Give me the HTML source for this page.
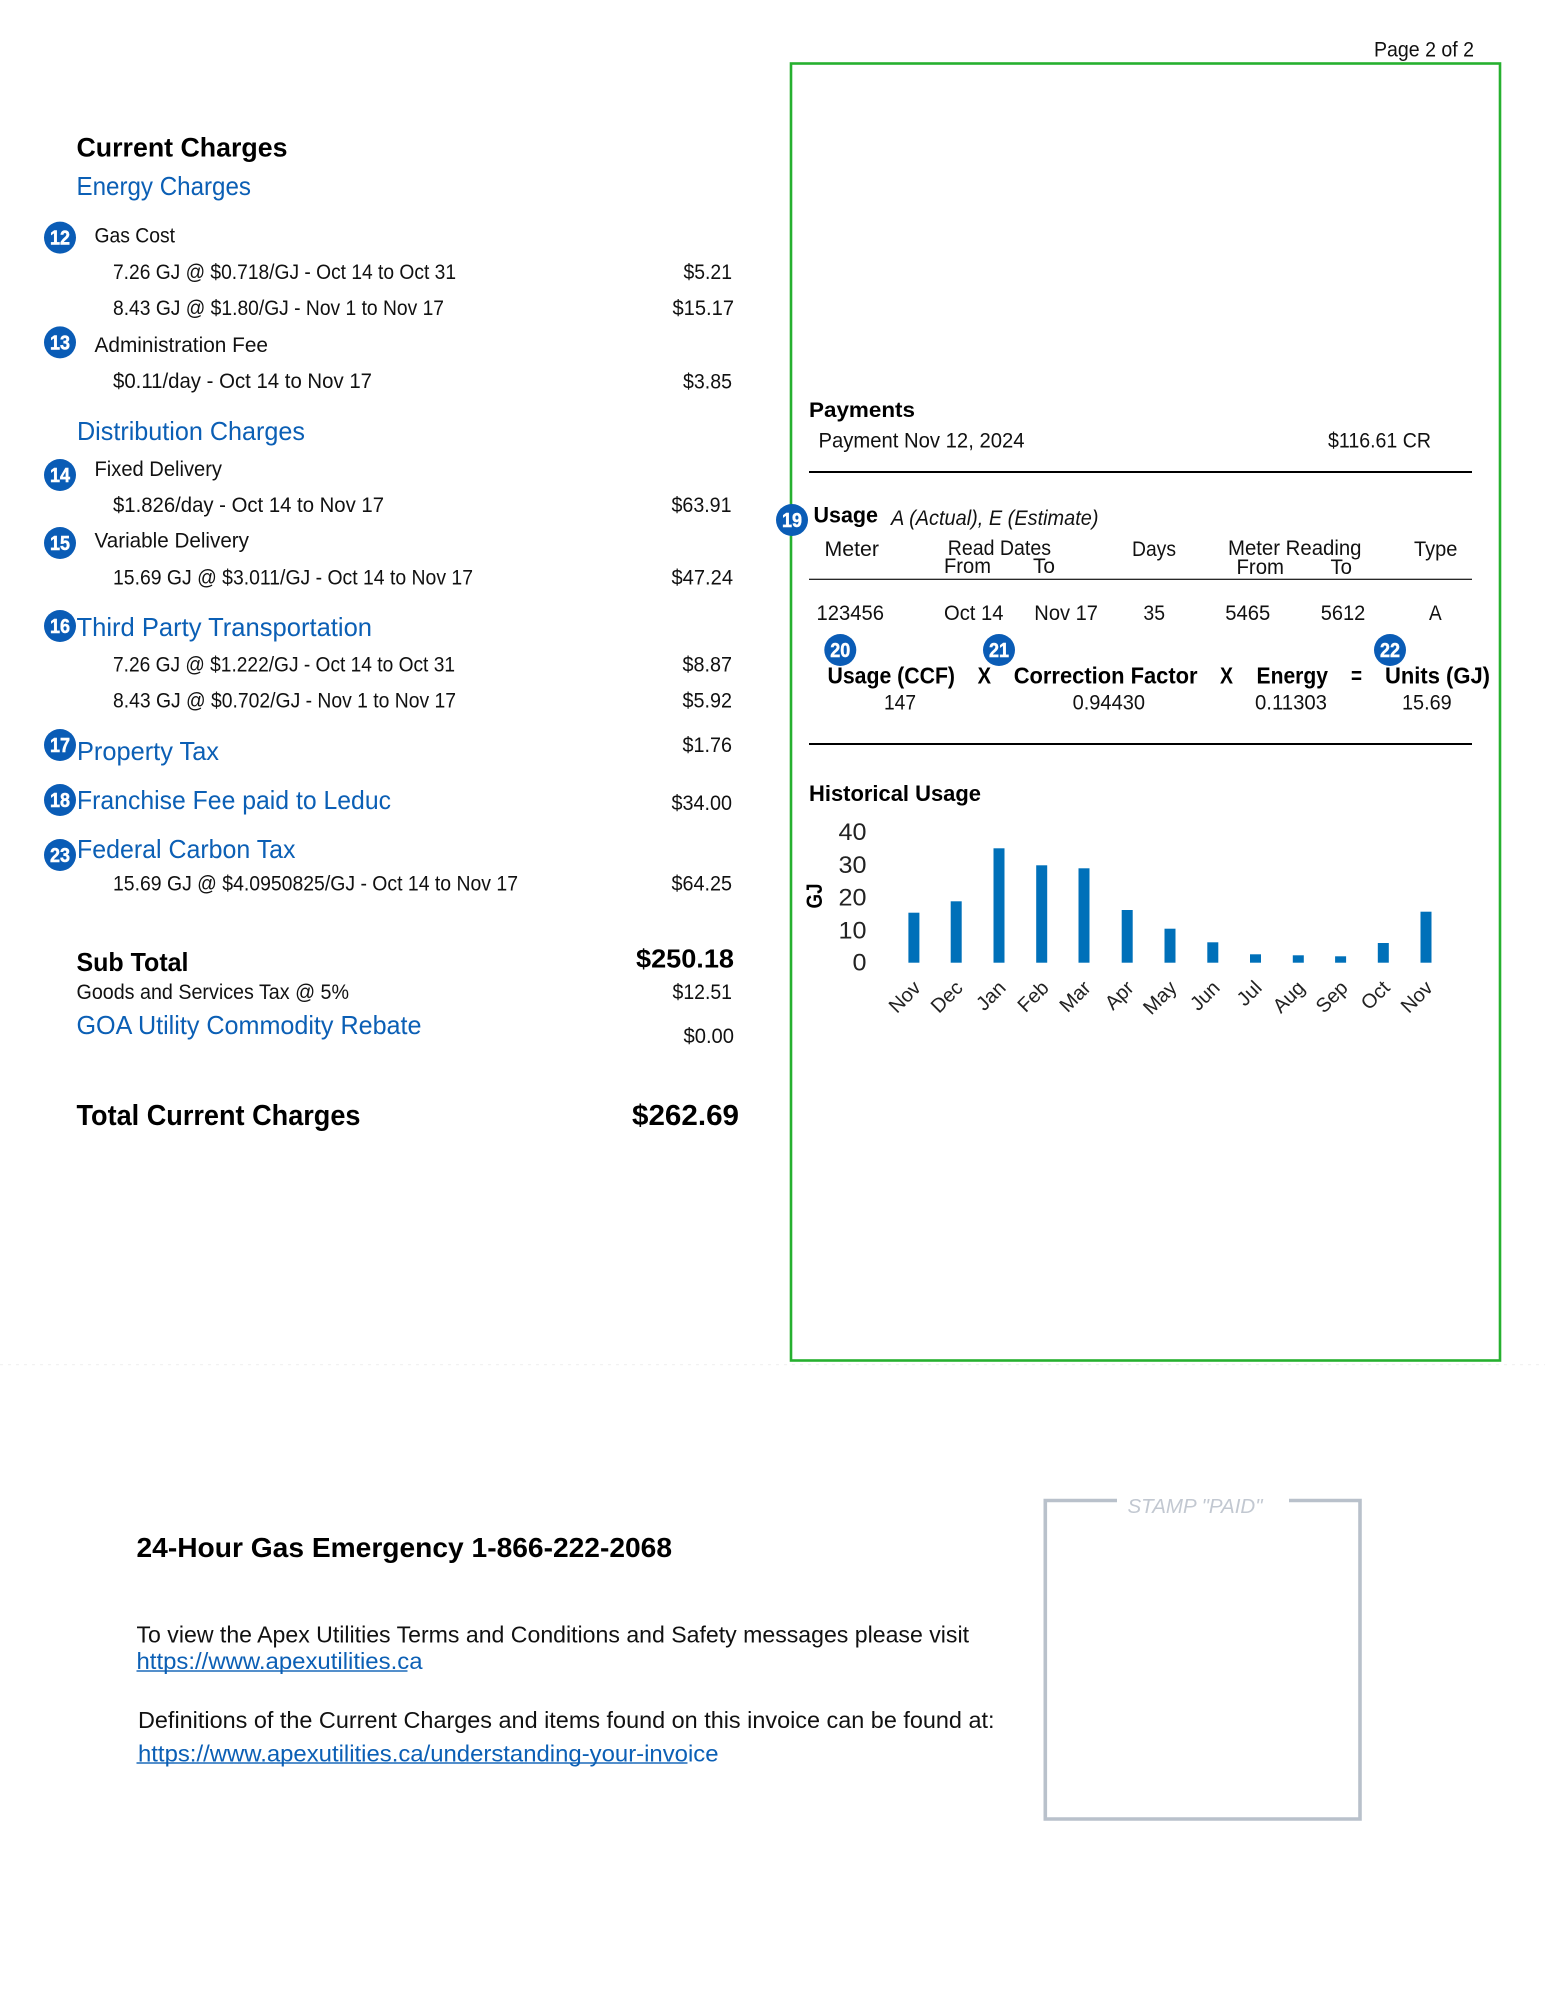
<!DOCTYPE html>
<html><head><meta charset="utf-8"><style>
html,body{margin:0;padding:0;background:#fff}
svg{display:block}
text{font-family:"Liberation Sans",Arial,sans-serif;fill:#111}
.b{font-weight:700;fill:#000}
.h{font-size:26px;fill:#0b5fb5}
.r{font-size:21px}
.n{font-weight:700;font-size:20px;fill:#fff;stroke:#fff;stroke-width:.5px}
.l{font-size:23px;fill:#0b5fb5}
.x{font-size:20px;fill:#222}
.y{font-size:24.5px;fill:#222}
</style></head><body>
<svg xmlns="http://www.w3.org/2000/svg" width="1545" height="2000" viewBox="0 0 1545 2000">
<rect width="1545" height="2000" fill="#fff"/>

<text class="r" x="1374" y="56.7" textLength="100" lengthAdjust="spacingAndGlyphs">Page 2 of 2</text>
<rect x="791" y="63.5" width="709" height="1297" fill="none" stroke="#26b02f" stroke-width="2.6"/>
<line x1="0" y1="1364.7" x2="1545" y2="1364.7" stroke="#f1f1f1" stroke-width="1.2" stroke-dasharray="3 5"/>

<!-- left column -->
<text class="b" font-size="27" x="76.5" y="156.5" textLength="211" lengthAdjust="spacingAndGlyphs">Current Charges</text>
<text class="h" x="76.5" y="195" textLength="174.5" lengthAdjust="spacingAndGlyphs">Energy Charges</text>

<circle cx="60" cy="237.6" r="16" fill="#0a5cb6"/><text class="n" x="50" y="244.6" textLength="20" lengthAdjust="spacingAndGlyphs">12</text>
<text class="r" x="94.5" y="242.6" textLength="80.5" lengthAdjust="spacingAndGlyphs">Gas Cost</text>
<text class="r" x="113" y="279" textLength="343" lengthAdjust="spacingAndGlyphs">7.26 GJ @ $0.718/GJ - Oct 14 to Oct 31</text>
<text class="r" x="683.5" y="279" textLength="48.5" lengthAdjust="spacingAndGlyphs">$5.21</text>
<text class="r" x="113" y="315" textLength="331" lengthAdjust="spacingAndGlyphs">8.43 GJ @ $1.80/GJ - Nov 1 to Nov 17</text>
<text class="r" x="672.5" y="315" textLength="61.5" lengthAdjust="spacingAndGlyphs">$15.17</text>

<circle cx="60" cy="342.4" r="16" fill="#0a5cb6"/><text class="n" x="50" y="349.4" textLength="20" lengthAdjust="spacingAndGlyphs">13</text>
<text class="r" x="94.5" y="352" textLength="173.5" lengthAdjust="spacingAndGlyphs">Administration Fee</text>
<text class="r" x="113" y="388" textLength="259" lengthAdjust="spacingAndGlyphs">$0.11/day - Oct 14 to Nov 17</text>
<text class="r" x="683" y="388.5" textLength="49" lengthAdjust="spacingAndGlyphs">$3.85</text>

<text class="h" x="77" y="440" textLength="228" lengthAdjust="spacingAndGlyphs">Distribution Charges</text>

<circle cx="60" cy="475" r="16" fill="#0a5cb6"/><text class="n" x="50" y="482" textLength="20" lengthAdjust="spacingAndGlyphs">14</text>
<text class="r" x="94.5" y="476" textLength="127.5" lengthAdjust="spacingAndGlyphs">Fixed Delivery</text>
<text class="r" x="113" y="512" textLength="271" lengthAdjust="spacingAndGlyphs">$1.826/day - Oct 14 to Nov 17</text>
<text class="r" x="671.5" y="512" textLength="60" lengthAdjust="spacingAndGlyphs">$63.91</text>

<circle cx="60" cy="543" r="16" fill="#0a5cb6"/><text class="n" x="50" y="550" textLength="20" lengthAdjust="spacingAndGlyphs">15</text>
<text class="r" x="94.5" y="547.5" textLength="154.5" lengthAdjust="spacingAndGlyphs">Variable Delivery</text>
<text class="r" x="113" y="584.6" textLength="360" lengthAdjust="spacingAndGlyphs">15.69 GJ @ $3.011/GJ - Oct 14 to Nov 17</text>
<text class="r" x="671.5" y="584.6" textLength="61.5" lengthAdjust="spacingAndGlyphs">$47.24</text>

<circle cx="60" cy="626" r="16" fill="#0a5cb6"/><text class="n" x="50" y="633" textLength="20" lengthAdjust="spacingAndGlyphs">16</text>
<text class="h" x="76.5" y="636" textLength="295.5" lengthAdjust="spacingAndGlyphs">Third Party Transportation</text>
<text class="r" x="113" y="671.7" textLength="342" lengthAdjust="spacingAndGlyphs">7.26 GJ @ $1.222/GJ - Oct 14 to Oct 31</text>
<text class="r" x="682.5" y="671.7" textLength="49.5" lengthAdjust="spacingAndGlyphs">$8.87</text>
<text class="r" x="113" y="707.7" textLength="343" lengthAdjust="spacingAndGlyphs">8.43 GJ @ $0.702/GJ - Nov 1 to Nov 17</text>
<text class="r" x="682.5" y="707.7" textLength="49.5" lengthAdjust="spacingAndGlyphs">$5.92</text>

<circle cx="60" cy="745" r="16" fill="#0a5cb6"/><text class="n" x="50" y="752" textLength="20" lengthAdjust="spacingAndGlyphs">17</text>
<text class="h" x="77" y="760" textLength="142" lengthAdjust="spacingAndGlyphs">Property Tax</text>
<text class="r" x="682.5" y="752" textLength="49.5" lengthAdjust="spacingAndGlyphs">$1.76</text>

<circle cx="60" cy="800" r="16" fill="#0a5cb6"/><text class="n" x="50" y="807" textLength="20" lengthAdjust="spacingAndGlyphs">18</text>
<text class="h" x="77" y="809" textLength="314" lengthAdjust="spacingAndGlyphs">Franchise Fee paid to Leduc</text>
<text class="r" x="671.5" y="810" textLength="60.5" lengthAdjust="spacingAndGlyphs">$34.00</text>

<circle cx="60" cy="855" r="16" fill="#0a5cb6"/><text class="n" x="50" y="862" textLength="20" lengthAdjust="spacingAndGlyphs">23</text>
<text class="h" x="77" y="858" textLength="218.5" lengthAdjust="spacingAndGlyphs">Federal Carbon Tax</text>
<text class="r" x="113" y="890.6" textLength="405" lengthAdjust="spacingAndGlyphs">15.69 GJ @ $4.0950825/GJ - Oct 14 to Nov 17</text>
<text class="r" x="671.5" y="890.6" textLength="60.5" lengthAdjust="spacingAndGlyphs">$64.25</text>

<text class="b" font-size="26" x="76.5" y="971" textLength="112" lengthAdjust="spacingAndGlyphs">Sub Total</text>
<text class="b" font-size="26" x="636" y="967.5" textLength="98" lengthAdjust="spacingAndGlyphs">$250.18</text>
<text class="r" x="76.5" y="999" textLength="272.5" lengthAdjust="spacingAndGlyphs">Goods and Services Tax @ 5%</text>
<text class="r" x="672.5" y="999" textLength="59.5" lengthAdjust="spacingAndGlyphs">$12.51</text>
<text class="h" x="76.5" y="1034" textLength="345" lengthAdjust="spacingAndGlyphs">GOA Utility Commodity Rebate</text>
<text class="r" x="683.5" y="1043" textLength="50.5" lengthAdjust="spacingAndGlyphs">$0.00</text>
<text class="b" font-size="29" x="76.5" y="1125" textLength="284" lengthAdjust="spacingAndGlyphs">Total Current Charges</text>
<text class="b" font-size="29" x="632" y="1125" textLength="107" lengthAdjust="spacingAndGlyphs">$262.69</text>

<!-- right column -->
<text class="b" font-size="21" x="809" y="417" textLength="106" lengthAdjust="spacingAndGlyphs">Payments</text>
<text class="r" x="818.5" y="447.7" textLength="206" lengthAdjust="spacingAndGlyphs">Payment Nov 12, 2024</text>
<text class="r" x="1328" y="447.7" textLength="103" lengthAdjust="spacingAndGlyphs">$116.61 CR</text>
<rect x="809" y="471" width="663" height="2" fill="#000"/>

<circle cx="792" cy="520" r="16" fill="#0a5cb6"/><text class="n" x="782" y="527" textLength="20" lengthAdjust="spacingAndGlyphs">19</text>
<text class="b" font-size="22" x="813.5" y="522.7" textLength="64.5" lengthAdjust="spacingAndGlyphs">Usage</text>
<text class="r" font-style="italic" x="891" y="525" textLength="207.5" lengthAdjust="spacingAndGlyphs">A (Actual), E (Estimate)</text>
<text class="r" x="824.5" y="556" textLength="54.5" lengthAdjust="spacingAndGlyphs">Meter</text>
<text class="r" x="947.7" y="555" textLength="103.3" lengthAdjust="spacingAndGlyphs">Read Dates</text>
<text class="r" x="944" y="573" textLength="47" lengthAdjust="spacingAndGlyphs">From</text>
<text class="r" x="1033" y="573" textLength="22" lengthAdjust="spacingAndGlyphs">To</text>
<text class="r" x="1132" y="556" textLength="44" lengthAdjust="spacingAndGlyphs">Days</text>
<text class="r" x="1228" y="555" textLength="133.5" lengthAdjust="spacingAndGlyphs">Meter Reading</text>
<text class="r" x="1236.5" y="574" textLength="47.5" lengthAdjust="spacingAndGlyphs">From</text>
<text class="r" x="1330.5" y="574" textLength="21.5" lengthAdjust="spacingAndGlyphs">To</text>
<text class="r" x="1414" y="556" textLength="43.4" lengthAdjust="spacingAndGlyphs">Type</text>
<rect x="809" y="578.7" width="663" height="1.2" fill="#111"/>

<text class="r" x="816.5" y="620" textLength="67.5" lengthAdjust="spacingAndGlyphs">123456</text>
<text class="r" x="944" y="620" textLength="59.5" lengthAdjust="spacingAndGlyphs">Oct 14</text>
<text class="r" x="1034.3" y="620" textLength="63.7" lengthAdjust="spacingAndGlyphs">Nov 17</text>
<text class="r" x="1143.4" y="620" textLength="21.6" lengthAdjust="spacingAndGlyphs">35</text>
<text class="r" x="1225.3" y="620" textLength="45" lengthAdjust="spacingAndGlyphs">5465</text>
<text class="r" x="1320.7" y="620" textLength="44.6" lengthAdjust="spacingAndGlyphs">5612</text>
<text class="r" x="1429" y="620" textLength="12.7" lengthAdjust="spacingAndGlyphs">A</text>

<circle cx="840.3" cy="650" r="16" fill="#0a5cb6"/><text class="n" x="830.3" y="657" textLength="20" lengthAdjust="spacingAndGlyphs">20</text>
<circle cx="999" cy="650" r="16" fill="#0a5cb6"/><text class="n" x="989" y="657" textLength="20" lengthAdjust="spacingAndGlyphs">21</text>
<circle cx="1390" cy="650" r="16" fill="#0a5cb6"/><text class="n" x="1380" y="657" textLength="20" lengthAdjust="spacingAndGlyphs">22</text>

<text class="b" font-size="23" x="827.5" y="683.7" textLength="127.5" lengthAdjust="spacingAndGlyphs">Usage (CCF)</text>
<text class="b" font-size="23" x="977.6" y="683.7" textLength="13.4" lengthAdjust="spacingAndGlyphs">X</text>
<text class="b" font-size="23" x="1013.7" y="683.7" textLength="183.9" lengthAdjust="spacingAndGlyphs">Correction Factor</text>
<text class="b" font-size="23" x="1220" y="683.7" textLength="13" lengthAdjust="spacingAndGlyphs">X</text>
<text class="b" font-size="23" x="1256.5" y="683.7" textLength="71.5" lengthAdjust="spacingAndGlyphs">Energy</text>
<text class="b" font-size="23" x="1351" y="683.7" textLength="11" lengthAdjust="spacingAndGlyphs">=</text>
<text class="b" font-size="23" x="1385" y="683.7" textLength="105" lengthAdjust="spacingAndGlyphs">Units (GJ)</text>

<text class="r" x="884" y="709.7" textLength="32" lengthAdjust="spacingAndGlyphs">147</text>
<text class="r" x="1072.6" y="709.7" textLength="72.4" lengthAdjust="spacingAndGlyphs">0.94430</text>
<text class="r" x="1255" y="709.7" textLength="72" lengthAdjust="spacingAndGlyphs">0.11303</text>
<text class="r" x="1402" y="709.7" textLength="49.7" lengthAdjust="spacingAndGlyphs">15.69</text>
<rect x="809" y="743" width="663" height="2" fill="#000"/>

<text class="b" font-size="22" x="809" y="801" textLength="172" lengthAdjust="spacingAndGlyphs">Historical Usage</text>

<!-- chart -->
<text class="y" x="838.5" y="840" textLength="28" lengthAdjust="spacingAndGlyphs">40</text>
<text class="y" x="838.5" y="873" textLength="28" lengthAdjust="spacingAndGlyphs">30</text>
<text class="y" x="838.5" y="905.7" textLength="28" lengthAdjust="spacingAndGlyphs">20</text>
<text class="y" x="838.5" y="938.3" textLength="28" lengthAdjust="spacingAndGlyphs">10</text>
<text class="y" x="852.5" y="970.7" textLength="14" lengthAdjust="spacingAndGlyphs">0</text>
<text class="b" font-size="22" transform="translate(822 908.5) rotate(-90)" textLength="25" lengthAdjust="spacingAndGlyphs">GJ</text>

<g fill="#0070b9">
<rect x="908.4" y="912.7" width="11" height="50"/>
<rect x="950.7" y="901.3" width="11" height="61.4"/>
<rect x="993.5" y="848.3" width="11" height="114.4"/>
<rect x="1036.2" y="865.3" width="11" height="97.4"/>
<rect x="1078.5" y="868.3" width="11" height="94.4"/>
<rect x="1121.7" y="910" width="11" height="52.7"/>
<rect x="1164.5" y="928.7" width="11" height="34"/>
<rect x="1207.3" y="942.3" width="11" height="20.4"/>
<rect x="1250" y="954.3" width="11" height="8.4"/>
<rect x="1292.8" y="955.3" width="11" height="7.4"/>
<rect x="1335.1" y="956.3" width="11" height="6.4"/>
<rect x="1377.8" y="943" width="11" height="19.7"/>
<rect x="1420.5" y="911.7" width="11" height="51"/>
</g>
<g text-anchor="end">
<text class="x" transform="translate(922 989) rotate(-45)">Nov</text>
<text class="x" transform="translate(964 989) rotate(-45)">Dec</text>
<text class="x" transform="translate(1007 989) rotate(-45)">Jan</text>
<text class="x" transform="translate(1050 989) rotate(-45)">Feb</text>
<text class="x" transform="translate(1092 989) rotate(-45)">Mar</text>
<text class="x" transform="translate(1135 989) rotate(-45)">Apr</text>
<text class="x" transform="translate(1178 989) rotate(-45)">May</text>
<text class="x" transform="translate(1221 989) rotate(-45)">Jun</text>
<text class="x" transform="translate(1263 989) rotate(-45)">Jul</text>
<text class="x" transform="translate(1306 989) rotate(-45)">Aug</text>
<text class="x" transform="translate(1349 989) rotate(-45)">Sep</text>
<text class="x" transform="translate(1391 989) rotate(-45)">Oct</text>
<text class="x" transform="translate(1434 989) rotate(-45)">Nov</text>
</g>

<!-- bottom -->
<text class="b" font-size="28" x="136.5" y="1557" textLength="535.5" lengthAdjust="spacingAndGlyphs">24-Hour Gas Emergency 1-866-222-2068</text>
<text font-size="23" x="136.5" y="1642.7" textLength="832.5" lengthAdjust="spacingAndGlyphs">To view the Apex Utilities Terms and Conditions and Safety messages please visit</text>
<text class="l" x="136.5" y="1669" textLength="286" lengthAdjust="spacingAndGlyphs">https://www.apexutilities.ca</text>
<rect x="136.5" y="1670.3" width="271" height="1.4" fill="#0b5fb5"/>
<text font-size="23" x="138" y="1728" textLength="856.5" lengthAdjust="spacingAndGlyphs">Definitions of the Current Charges and items found on this invoice can be found at:</text>
<text class="l" x="138" y="1761.7" textLength="580.5" lengthAdjust="spacingAndGlyphs">https://www.apexutilities.ca/understanding-your-invoice</text>
<rect x="136.5" y="1762.3" width="551" height="1.4" fill="#0b5fb5"/>

<path d="M1117 1500.5H1045.3V1819H1360V1500.5H1289" fill="none" stroke="#b9c1cb" stroke-width="3.6"/>
<text font-size="20" font-style="italic" style="fill:#c2c8d1" x="1127.5" y="1513" textLength="135" lengthAdjust="spacingAndGlyphs">STAMP "PAID"</text>
</svg>
</body></html>
